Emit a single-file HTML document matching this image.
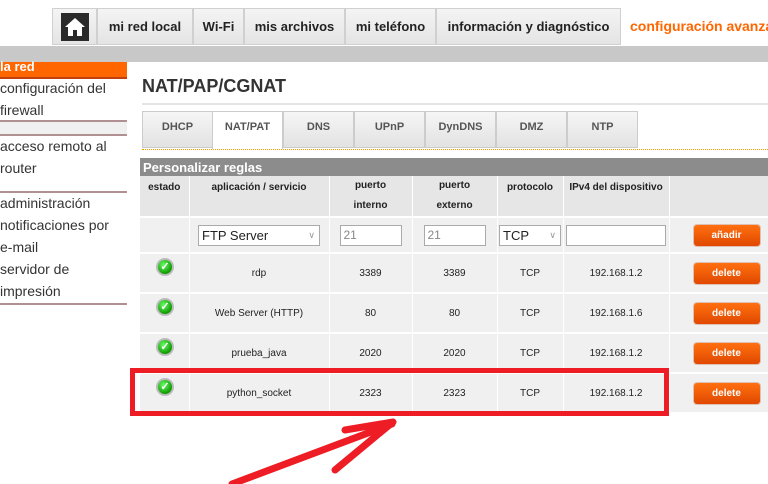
<!DOCTYPE html><html><head><meta charset="utf-8"><style>
*{margin:0;padding:0;box-sizing:border-box}
body{width:768px;height:484px;overflow:hidden;background:#fff;font-family:"Liberation Sans",Arial,sans-serif;position:relative}
.a{position:absolute}
.nav{top:8px;height:37px;background:linear-gradient(#f4f4f4,#e4e4e4);border:1px solid #d0d0d0;font-weight:bold;font-size:13px;color:#222;text-align:center;line-height:36px;white-space:nowrap}
.side{left:0;font-size:14px;color:#333;line-height:22px}
.sl{left:0;width:127px;height:2px;background:#b09090}
.tab{top:111px;height:37px;width:71px;background:linear-gradient(#f6f6f6,#e2e2e2);border:1px solid #ccc;font-weight:bold;font-size:11px;color:#555;text-align:center;line-height:30px}
table{border-collapse:collapse;font-size:10px;color:#222;table-layout:fixed}
td{border-right:1px solid #fff;border-bottom:2px solid #fff;text-align:center;background:#f0f0f0;overflow:visible}
.btn{display:inline-block;width:66px;height:21px;border-radius:3px;background:linear-gradient(#ff7010,#e04800);color:#fff;font-weight:bold;font-size:10px;line-height:21px;box-shadow:0 0 0 1px #e0c0b0;text-align:center}
.ok{width:18px;height:18px;border-radius:50%;background:radial-gradient(circle at 40% 35%,#6f6,#190 70%);border:2px solid #bbb;color:#fff;font-size:11px;line-height:14px;font-weight:bold;position:absolute;left:16px;top:4px}
.inp{display:inline-block;border:1px solid #aaa;background:#fff;height:21px;font-size:12px;text-align:left;padding-left:3px;line-height:19px;color:#888;vertical-align:middle}
.bc{text-align:right;padding-right:8px}
</style></head><body>
<div class="a nav" style="left:52px;width:45px;padding-top:4px"><div style="width:28px;height:28px;background:#2a2a2a;margin:0 auto;position:relative"><svg width="28" height="28" viewBox="0 0 28 28"><path d="M4 14 L14 5 L24 14 L21 14 L21 23 L16 23 L16 17 L12 17 L12 23 L7 23 L7 14 Z" fill="#fff"/></svg></div></div>
<div class="a nav" style="left:97px;width:96px">mi red local</div>
<div class="a nav" style="left:193px;width:51px">Wi-Fi</div>
<div class="a nav" style="left:244px;width:101px">mis archivos</div>
<div class="a nav" style="left:345px;width:91px">mi teléfono</div>
<div class="a nav" style="left:436px;width:185px">información y diagnóstico</div>
<div class="a" style="left:630px;top:8px;line-height:36px;font-weight:bold;font-size:14px;color:#f60;white-space:nowrap">configuración avanzada</div>
<div class="a" style="left:0;top:46px;width:768px;height:16px;background:#c8c8c8"></div>
<div class="a" style="left:0;top:62px;width:127px;height:15px;background:#f60;color:#fff;font-weight:bold;font-size:13px;line-height:10px">la red</div>
<div class="a sl" style="top:77px;background:#c04010"></div>
<div class="a side" style="top:77px">configuración del<br>firewall</div>
<div class="a sl" style="top:120px"></div>
<div class="a" style="left:0;top:122px;width:127px;height:12px;background:#f0f0f0"></div>
<div class="a sl" style="top:134px"></div>
<div class="a side" style="top:135px">acceso remoto al<br>router</div>
<div class="a sl" style="top:191px"></div>
<div class="a side" style="top:192px">administración<br>notificaciones por<br>e-mail<br>servidor de<br>impresión</div>
<div class="a sl" style="top:303px"></div>
<div class="a" style="left:142px;top:76px;font-size:18px;font-weight:bold;color:#333">NAT/PAP/CGNAT</div>
<div class="a" style="left:142px;top:103px;width:626px;height:2px;background:#e4e4e4"></div>
<div class="a tab" style="left:142px">DHCP</div>
<div class="a tab" style="left:212px;background:#fff;border-bottom:none;height:38px">NAT/PAT</div>
<div class="a tab" style="left:283px">DNS</div>
<div class="a tab" style="left:354px">UPnP</div>
<div class="a tab" style="left:425px">DynDNS</div>
<div class="a tab" style="left:496px">DMZ</div>
<div class="a tab" style="left:567px">NTP</div>
<div class="a" style="left:142px;top:149px;width:626px;border-top:1px dotted #f90"></div>
<div class="a" style="left:140px;top:158px;width:628px;height:18px;background:#8c8c8c;color:#fff;font-weight:bold;font-size:13px;line-height:20px;padding-left:3px">Personalizar reglas</div>
<table class="a" style="left:140px;top:176px;width:628px">
<colgroup><col style="width:49px"><col style="width:140px"><col style="width:83px"><col style="width:85px"><col style="width:66px"><col style="width:106px"><col style="width:99px"></colgroup>
<tr style="height:40px;font-weight:bold;vertical-align:top"><td style="background:#e6e6e6;padding-top:6px">estado</td><td style="background:#e6e6e6;padding-top:6px">aplicación / servicio</td><td style="background:#e6e6e6;line-height:20px">puerto<br>interno</td><td style="background:#e6e6e6;line-height:20px">puerto<br>externo</td><td style="background:#e6e6e6;padding-top:6px">protocolo</td><td style="background:#e6e6e6;padding-top:6px;white-space:nowrap">IPv4 del dispositivo</td><td style="background:#e6e6e6"></td></tr>
<tr style="height:36px"><td></td><td><span class="inp" style="width:122px;color:#222;font-size:13px">FTP Server <span style="float:right;margin-right:4px;color:#999;font-size:9px">∨</span></span></td><td><span class="inp" style="width:62px">21</span></td><td><span class="inp" style="width:62px">21</span></td><td><span class="inp" style="width:62px;color:#222;font-size:13px">TCP <span style="float:right;margin-right:4px;color:#999;font-size:9px">∨</span></span></td><td><span class="inp" style="width:100px"></span></td><td class="bc"><span class="btn">añadir</span></td></tr>
<tr style="height:40px"><td style="position:relative"><div class="ok">✓</div></td><td>rdp</td><td>3389</td><td>3389</td><td>TCP</td><td>192.168.1.2</td><td class="bc"><span class="btn">delete</span></td></tr>
<tr style="height:40px"><td style="position:relative"><div class="ok">✓</div></td><td>Web Server (HTTP)</td><td>80</td><td>80</td><td>TCP</td><td>192.168.1.6</td><td class="bc"><span class="btn">delete</span></td></tr>
<tr style="height:40px"><td style="position:relative"><div class="ok">✓</div></td><td>prueba_java</td><td>2020</td><td>2020</td><td>TCP</td><td>192.168.1.2</td><td class="bc"><span class="btn">delete</span></td></tr>
<tr style="height:40px"><td style="position:relative"><div class="ok">✓</div></td><td>python_socket</td><td>2323</td><td>2323</td><td>TCP</td><td>192.168.1.2</td><td class="bc"><span class="btn">delete</span></td></tr>
</table>
<div class="a" style="left:130px;top:368px;width:539px;height:48px;border:5px solid #ee1c25"></div>
<svg class="a" style="left:0;top:0" width="768" height="484"><path d="M232 484 L392 424 M345 430 L393 422 L335 470" stroke="#ee1c25" stroke-width="7" fill="none" stroke-linecap="round" stroke-linejoin="round"/></svg>
</body></html>
